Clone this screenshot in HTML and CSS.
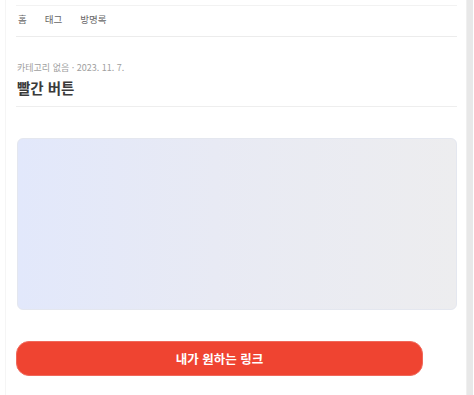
FILE: index.html
```html
<!DOCTYPE html>
<html lang="ko">
<head>
<meta charset="utf-8">
<link rel="stylesheet" href="styles.css">
</head>
<body>
<div class="frame">
  <div class="content">
    <nav class="nav">
      <a class="nav-item">홈</a>
      <a class="nav-item">태그</a>
      <a class="nav-item">방명록</a>
    </nav>
    <header class="post-head">
      <div class="meta">카테고리 없음 · 2023. 11. 7.</div>
      <h1 class="title">빨간 버튼</h1>
    </header>
    <div class="placeholder"></div>
    <a class="cta">내가 원하는 링크</a>
  </div>
  <div class="scrollbar"></div>
</div>
</body>
</html>
```
FILE: styles.css
```css
html, body {
  margin: 0;
  padding: 0;
  background: #ffffff;
  font-family: "Noto Sans CJK KR", "Noto Sans", sans-serif;
}
.frame {
  display: flex;
  height: 395px;
  margin-left: 5px;
  border-left: 1px solid #f5f5f5;
  overflow: hidden;
}
.content {
  flex: 1;
  padding: 0 9px 0 10px;
}
.scrollbar {
  width: 6px;
  margin-right: 1px;
  background: #e8e8e8;
  border-left: 1px solid #f0f0f0;
}
.nav {
  margin-top: 5px;
  border-top: 1px solid #f2f2f2;
  border-bottom: 1px solid #ececec;
  padding: 5px 0 9px 2px;
  display: flex;
  gap: 18px;
  font-size: 9.5px;
  line-height: 16px;
  color: #666666;
}
.nav-item {
  color: inherit;
}
.post-head {
  border-bottom: 1px solid #eeeeee;
  padding: 24px 0 7px 1px;
}
.meta {
  font-size: 9px;
  line-height: 14px;
  color: #a0a0a0;
}
.title {
  margin: 2px 0 0;
  font-size: 14.5px;
  line-height: 22px;
  font-weight: 700;
  color: #3a3a3a;
}
.placeholder {
  margin-top: 31px;
  height: 170px;
  margin-left: 1px;
  border: 1px solid #e4e7ef;
  border-radius: 6px;
  background: linear-gradient(90deg, #e2e8fb 0%, #e8eaf4 45%, #ededef 100%);
}
.cta {
  display: flex;
  align-items: center;
  justify-content: center;
  margin-top: 31px;
  width: 407px;
  height: 35px;
  box-sizing: border-box;
  border-radius: 13px;
  background: #ef4431;
  border: 1px solid #f0685a;
  color: #ffffff;
  font-size: 12.5px;
  font-weight: 700;
}
```
